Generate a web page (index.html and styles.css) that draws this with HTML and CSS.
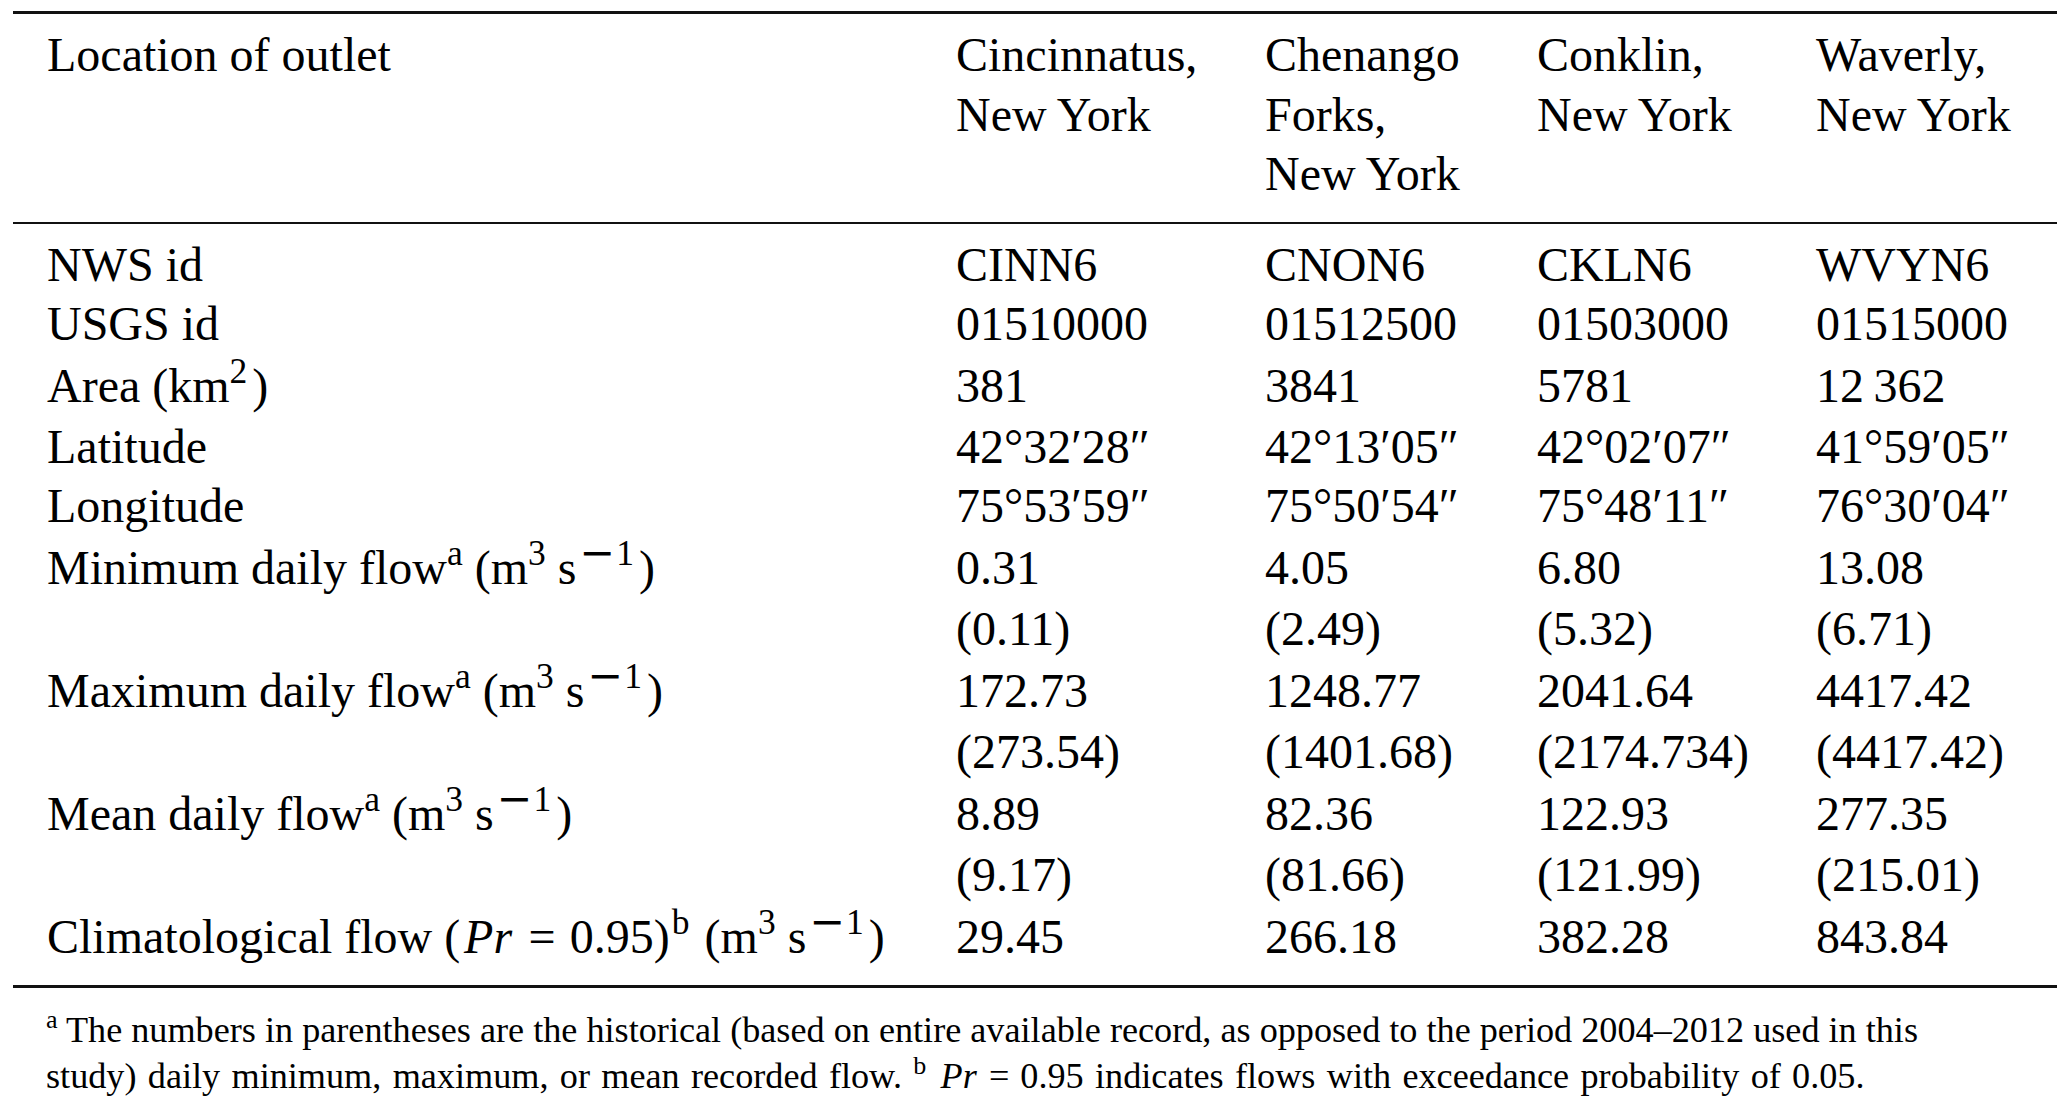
FILE: index.html
```html
<!DOCTYPE html>
<html lang="en">
<head>
<meta charset="utf-8">
<title>Table</title>
<link rel="stylesheet" href="styles.css">
</head>
<body>
<table class="data">
  <colgroup>
    <col class="c1"><col class="c2"><col class="c3"><col class="c4"><col class="c5">
  </colgroup>
  <thead>
    <tr>
      <th>Location of outlet</th>
      <th>Cincinnatus,<br>New York</th>
      <th>Chenango<br>Forks,<br>New York</th>
      <th>Conklin,<br>New York</th>
      <th>Waverly,<br>New York</th>
    </tr>
  </thead>
  <tbody>
    <tr class="first"><td>NWS id</td><td>CINN6</td><td>CNON6</td><td>CKLN6</td><td>WVYN6</td></tr>
    <tr><td>USGS id</td><td>01510000</td><td>01512500</td><td>01503000</td><td>01515000</td></tr>
    <tr class="sup-row"><td>Area (km<sup class="end">2</sup>)</td><td>381</td><td>3841</td><td>5781</td><td>12&#8201;362</td></tr>
    <tr><td>Latitude</td><td>42°32′28″</td><td>42°13′05″</td><td>42°02′07″</td><td>41°59′05″</td></tr>
    <tr><td>Longitude</td><td>75°53′59″</td><td>75°50′54″</td><td>75°48′11″</td><td>76°30′04″</td></tr>
    <tr class="sup-row"><td>Minimum daily flow<sup>a</sup> (m<sup>3</sup> s<sup class="end"><span class="minus">−</span>1</sup>)</td><td>0.31</td><td>4.05</td><td>6.80</td><td>13.08</td></tr>
    <tr><td></td><td>(0.11)</td><td>(2.49)</td><td>(5.32)</td><td>(6.71)</td></tr>
    <tr class="sup-row"><td>Maximum daily flow<sup>a</sup> (m<sup>3</sup> s<sup class="end"><span class="minus">−</span>1</sup>)</td><td>172.73</td><td>1248.77</td><td>2041.64</td><td>4417.42</td></tr>
    <tr><td></td><td>(273.54)</td><td>(1401.68)</td><td>(2174.734)</td><td>(4417.42)</td></tr>
    <tr class="sup-row"><td>Mean daily flow<sup>a</sup> (m<sup>3</sup> s<sup class="end"><span class="minus">−</span>1</sup>)</td><td>8.89</td><td>82.36</td><td>122.93</td><td>277.35</td></tr>
    <tr><td></td><td>(9.17)</td><td>(81.66)</td><td>(121.99)</td><td>(215.01)</td></tr>
    <tr class="sup-row last"><td>Climatological flow (<i class="var">Pr</i><span class="eq">=</span>0.95)<sup class="after">b</sup> (m<sup>3</sup> s<sup class="end"><span class="minus">−</span>1</sup>)</td><td>29.45</td><td>266.18</td><td>382.28</td><td>843.84</td></tr>
  </tbody>
</table>
<div class="notes">
  <p><sup>a</sup> The numbers in parentheses are the historical (based on entire available record, as opposed to the period 2004–2012 used in this<br><span class="last-line">study) daily minimum, maximum, or mean recorded flow. <sup>b</sup> <i class="var">Pr</i><span class="eq">=</span>0.95 indicates flows with exceedance probability of 0.05.</span></p>
</div>
</body>
</html>
```

FILE: styles.css
```css
html, body {
  margin: 0;
  padding: 0;
  background: #ffffff;
}

body {
  font-family: "Liberation Serif", "Times New Roman", serif;
  color: #000000;
  width: 2067px;
  height: 1101px;
  overflow: hidden;
}

.data {
  margin: 11px 0 0 13px;
  width: 2044px;
  table-layout: fixed;
  border-collapse: separate;
  border-spacing: 0;
  font-size: 48px;
}

.c1 { width: 943px; }
.c2 { width: 309px; }
.c3 { width: 272px; }
.c4 { width: 279px; }
.c5 { width: 241px; }

.data th,
.data td {
  text-align: left;
  font-weight: normal;
  padding: 0;
  vertical-align: top;
  white-space: nowrap;
}

.data th:first-child,
.data td:first-child {
  padding-left: 34px;
}

.data thead th {
  line-height: 59.5px;
  border-top: 3px solid #111;
  border-bottom: 2px solid #111;
  padding-top: 11px;
  padding-bottom: 18px;
}

.data tbody td {
  line-height: 59px;
}

.data tbody tr.sup-row td {
  padding-top: 3px;
  padding-bottom: 2px;
}

.data tbody tr.first td {
  padding-top: 11px;
}

.data tbody tr.last td {
  border-bottom: 3px solid #111;
  padding-bottom: 19px;
}

sup {
  font-size: 0.74em;
  line-height: 0;
  vertical-align: 19px;
}

sup.end {
  margin-right: 5px;
}

sup.after {
  margin-left: 2px;
  margin-right: 3px;
}

.minus {
  font-family: "DejaVu Sans", sans-serif;
  font-size: 1.2em;
  line-height: 0;
  margin-left: 3px;
  margin-right: 1px;
  vertical-align: -2px;
}

.var {
  margin-left: 0.08em;
  margin-right: 0.04em;
}

.eq {
  margin: 0 0.3em;
}

.notes {
  margin: 0 0 0 46px;
  font-size: 36.2px;
  line-height: 46px;
}

.notes p {
  margin: 19px 0 0 0;
  white-space: nowrap;
}

.notes .last-line {
  word-spacing: 2.3px;
}

.notes sup {
  font-size: 0.72em;
  vertical-align: 14px;
}
```
